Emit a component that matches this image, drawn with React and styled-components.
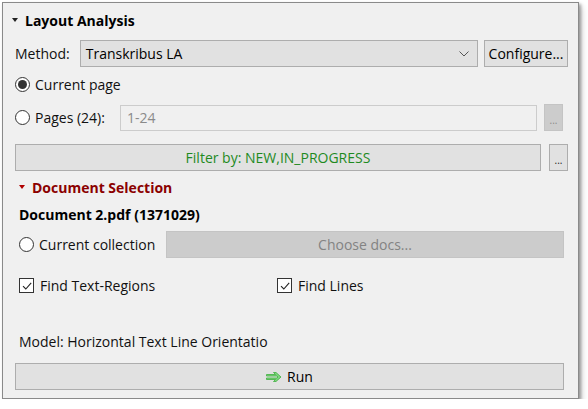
import styled, { createGlobalStyle } from "styled-components";

const GlobalStyle = createGlobalStyle`
  html, body {
    margin: 0;
    padding: 0;
    background: #ffffff;
  }
  body {
    font-family: "Open Sans", "Noto Sans", "Liberation Sans", sans-serif;
    font-size: 14px;
    color: #000;
  }
`;

const App = () => {
  return (
    <>
      <GlobalStyle />
      <Frame>
        <SectionHeader>
          <Caret />
          <span>Layout Analysis</span>
        </SectionHeader>

        <Row $mt={3}>
          <Label>Method:</Label>
          <Combo>
            <span>Transkribus LA</span>
            <svg width="10" height="6" viewBox="0 0 10 6">
              <path d="M0.5 0.5 L5 5 L9.5 0.5" fill="none" stroke="#555" strokeWidth="1" />
            </svg>
          </Combo>
          <Button $w={84}>Configure...</Button>
        </Row>

        <Row $mt={4} $gap={5}>
          <Radio $checked />
          <Label>Current page</Label>
        </Row>

        <Row $mt={6} $gap={5} $pr={5}>
          <Radio />
          <Label $w={80}>Pages (24):</Label>
          <Input>1-24</Input>
          <DotsButton $disabled>...</DotsButton>
        </Row>

        <Row $mt={13} $gap={8}>
          <Button $grow $green>Filter by: NEW,IN_PROGRESS</Button>
          <DotsButton>...</DotsButton>
        </Row>

        <SubSection>
          <SectionHeader $red $h={24}>
            <Caret $red />
            <span>Document Selection</span>
          </SectionHeader>

          <DocName>Document 2.pdf (1371029)</DocName>

          <Row $mt={5} $gap={5}>
            <Radio />
            <Label $w={122}>Current collection</Label>
            <Button $grow $disabled>Choose docs...</Button>
          </Row>

          <Row $mt={14} $gap={0}>
            <CheckItem $w={258}>
              <Checkbox />
              <Label>Find Text-Regions</Label>
            </CheckItem>
            <CheckItem>
              <Checkbox />
              <Label>Find Lines</Label>
            </CheckItem>
          </Row>

          <Row $mt={29}>
            <Label>Model: Horizontal Text Line Orientatio</Label>
          </Row>
        </SubSection>

        <Row $mt={8} $pr={4}>
          <Button $grow>
            <RunArrow />
            Run
          </Button>
        </Row>
      </Frame>
    </>
  );
};

export default App;

const Check = () => (
  <svg width="12" height="12" viewBox="0 0 12 12">
    <path d="M2 6.2 L4.8 9 L10.2 2.8" fill="none" stroke="#222" strokeWidth="1.1" />
  </svg>
);

const RunArrow = () => (
  <svg width="16" height="10" viewBox="0 0 16 10" style={{ marginRight: 5 }}>
    <path
      d="M0.5 2.5 H9.5 L7.5 0.5 H10 L15 5 L10 9.5 H7.5 L9.5 7.5 H0.5 V6 H11 L12 5 L11 4 H0.5 Z"
      fill="#7ed67e"
      stroke="#3fae3f"
      strokeWidth="0.8"
      strokeLinejoin="round"
    />
  </svg>
);

const Frame = styled.div`
  box-sizing: border-box;
  margin: 2px 0 0 2px;
  width: 577px;
  height: 397px;
  background: #f0f0f0;
  border: 1px solid #8a8a8a;
  box-shadow: 2px 2px 3px rgba(0, 0, 0, 0.35), 4px 5px 6px rgba(0, 0, 0, 0.12);
  display: flex;
  flex-direction: column;
  padding: 0 10px 0 12px;
`;

const SectionHeader = styled.div`
  height: ${(p) => p.$h || 34}px;
  display: flex;
  align-items: center;
  gap: 7px;
  font-weight: 700;
  font-size: 14px;
  color: ${(p) => (p.$red ? "#8b0000" : "#000")};
`;

const Caret = styled.span`
  width: 0;
  height: 0;
  margin-left: ${(p) => (p.$red ? 0 : -3)}px;
  border-left: 3.5px solid transparent;
  border-right: 3.5px solid transparent;
  border-top: 4px solid ${(p) => (p.$red ? "#b00000" : "#222")};
`;

const Row = styled.div`
  height: 27px;
  margin-top: ${(p) => p.$mt || 0}px;
  padding-right: ${(p) => p.$pr || 0}px;
  display: flex;
  align-items: center;
  gap: ${(p) => (p.$gap ?? 6)}px;
`;

const Label = styled.span`
  white-space: nowrap;
  color: #111;
  width: ${(p) => (p.$w ? `${p.$w}px` : "auto")};
  flex-shrink: 0;
`;

const Combo = styled.div`
  box-sizing: border-box;
  flex: 1;
  height: 27px;
  margin-left: 4px;
  display: flex;
  align-items: center;
  justify-content: space-between;
  padding: 0 8px 0 5px;
  background: #e1e1e1;
  border: 1px solid #adadad;
`;

const Button = styled.div`
  box-sizing: border-box;
  height: 27px;
  width: ${(p) => (p.$w ? `${p.$w}px` : "auto")};
  flex: ${(p) => (p.$grow ? 1 : "0 0 auto")};
  display: flex;
  align-items: center;
  justify-content: center;
  white-space: nowrap;
  background: ${(p) => (p.$disabled ? "#cccccc" : "#e1e1e1")};
  border: 1px solid ${(p) => (p.$disabled ? "#c4c4c4" : "#adadad")};
  color: ${(p) => (p.$disabled ? "#838383" : p.$green ? "#1f8a1f" : "#000")};
`;

const DotsButton = styled.div`
  box-sizing: border-box;
  width: 19px;
  height: 27px;
  display: flex;
  align-items: center;
  justify-content: center;
  font-size: 10px;
  line-height: 1;
  padding-top: 4px;
  background: ${(p) => (p.$disabled ? "#cccccc" : "#e1e1e1")};
  border: 1px solid ${(p) => (p.$disabled ? "#c4c4c4" : "#adadad")};
  color: ${(p) => (p.$disabled ? "#8a8a8a" : "#222")};
`;

const Input = styled.div`
  box-sizing: border-box;
  flex: 1;
  height: 26px;
  margin-right: 2px;
  display: flex;
  align-items: center;
  padding-left: 6px;
  border: 1px solid #cccccc;
  color: #8a8a8a;
`;

const Radio = styled.span`
  box-sizing: border-box;
  width: 15px;
  height: 15px;
  flex-shrink: 0;
  border-radius: 50%;
  border: 1px solid #333;
  background: #fff;
  display: flex;
  align-items: center;
  justify-content: center;

  &::after {
    content: "";
    display: ${(p) => (p.$checked ? "block" : "none")};
    width: 9px;
    height: 9px;
    border-radius: 50%;
    background: #333;
  }
`;

const SubSection = styled.div`
  display: flex;
  flex-direction: column;
  padding: 0 4px 0 4px;
  margin-top: 4px;
`;

const DocName = styled.div`
  height: 24px;
  margin-top: 3px;
  display: flex;
  align-items: center;
  font-weight: 700;
`;

const CheckItem = styled.div`
  display: flex;
  align-items: center;
  gap: 6px;
  width: ${(p) => (p.$w ? `${p.$w}px` : "auto")};
`;

const CheckboxBox = styled.span`
  box-sizing: border-box;
  width: 15px;
  height: 15px;
  border: 1px solid #333;
  background: #fff;
  display: flex;
  align-items: center;
  justify-content: center;
`;

const Checkbox = () => (
  <CheckboxBox>
    <Check />
  </CheckboxBox>
);
